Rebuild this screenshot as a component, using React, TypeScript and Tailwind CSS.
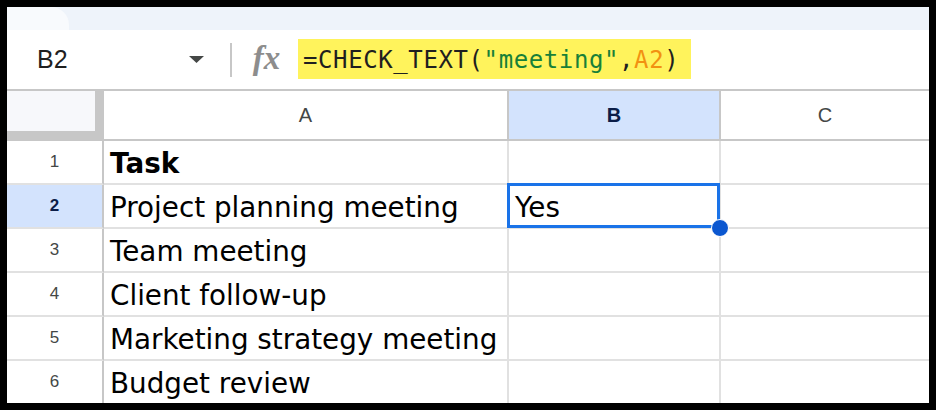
const rows = [
  { n: 1, a: "Task", bold: true },
  { n: 2, a: "Project planning meeting", b: "Yes", selected: true },
  { n: 3, a: "Team meeting" },
  { n: 4, a: "Client follow-up" },
  { n: 5, a: "Marketing strategy meeting" },
  { n: 6, a: "Budget review" },
];

const cellFont = { fontFamily: '"DejaVu Sans", Verdana, sans-serif' };
const uiFont = { fontFamily: '"Liberation Sans", Arial, sans-serif' };

export default function App() {
  return (
    <div className="w-[936px] h-[410px] bg-black p-[7px]">
      <div className="w-full h-full bg-white overflow-hidden flex flex-col">
        {/* top strip */}
        <div className="h-[23px] flex bg-[#eef3fa] shrink-0">
          <div className="w-[62px] bg-[#f8fafd] rounded-tr-[18px]"></div>
          <div className="flex-1"></div>
        </div>

        {/* formula bar */}
        <div className="h-[61px] shrink-0 flex items-center border-b-2 border-[#c7c7c7]" style={uiFont}>
          <div className="w-[223px] h-full flex items-center pl-[30px] pr-[26px]">
            <span className="text-[25px] text-[#1f1f1f] leading-none">B2</span>
            <svg className="ml-auto" width="15" height="8" viewBox="0 0 15 8">
              <path d="M0 0 L15 0 L7.5 7 Z" fill="#444746" />
            </svg>
          </div>
          <div className="w-[2px] h-[34px] bg-[#c7c7c7]"></div>
          <div
            className="w-[66px] flex justify-center text-[33px] italic font-bold text-[#8d8d8d] leading-none pl-[3px] pb-[3px]"
            style={{ fontFamily: '"Liberation Serif", "Times New Roman", serif' }}
          >
            fx
          </div>
          <div
            className="h-[40px] w-[393px] bg-[#fff35c] flex items-center pl-[5px] pt-[2px] text-[24px] tracking-[0.6px] text-[#1f1f1f] mb-[1px]"
            style={{ fontFamily: '"DejaVu Sans Mono", "Liberation Mono", monospace' }}
          >
            <span>=CHECK_TEXT(</span>
            <span className="text-[#188038]">"meeting"</span>
            <span>,</span>
            <span className="text-[#f29111]">A2</span>
            <span>)</span>
          </div>
        </div>

        {/* grid */}
        <div className="grid grid-cols-[97px_405px_212px_1fr] grid-rows-[50px_44px_44px_44px_44px_44px_44px]">
          {/* header row */}
          <div className="bg-[#c7c7c7]">
            <div className="w-[88px] h-[40px] bg-[#f7f8fb]"></div>
          </div>
          <div
            className="flex items-center justify-center border-r-2 border-b-2 border-[#c7c7c7] text-[20px] text-[#444746]"
            style={uiFont}
          >
            A
          </div>
          <div
            className="flex items-center justify-center border-r-2 border-b-2 border-[#c7c7c7] bg-[#d3e3fd] text-[20px] font-bold text-[#0b1d48]"
            style={uiFont}
          >
            B
          </div>
          <div
            className="flex items-center justify-center border-b-2 border-[#c7c7c7] text-[20px] text-[#444746]"
            style={uiFont}
          >
            C
          </div>

          {rows.map((r) => (
            <Row key={r.n} {...r} />
          ))}
        </div>
      </div>
    </div>
  );
}

function Row({
  n,
  a,
  b,
  bold,
  selected,
}: {
  n: number;
  a: string;
  b?: string;
  bold?: boolean;
  selected?: boolean;
}) {
  return (
    <>
      <div
        className={`flex items-center justify-center border-r-2 border-r-[#c7c7c7] border-b-2 border-b-[#e1e1e1] text-[17px] ${
          selected ? "bg-[#d3e3fd] font-bold text-[#0b1d48]" : "text-[#444746]"
        }`}
        style={uiFont}
      >
        {n}
      </div>
      <div
        className={`flex items-center pl-[6px] pt-[3px] border-r-2 border-b-2 border-[#e1e1e1] text-[27.8px] text-black whitespace-nowrap ${
          bold ? "font-bold" : ""
        }`}
        style={cellFont}
      >
        {a}
      </div>
      <div
        className="relative flex items-center pl-[6px] pt-[3px] border-r-2 border-b-2 border-[#e1e1e1] text-[27.8px] text-black"
        style={cellFont}
      >
        {b}
        {selected && (
          <>
            <div className="absolute -left-[2px] -top-[2px] w-[213px] h-[45px] border-[3px] border-[#1a73e8]"></div>
            <div className="absolute -right-[10px] -bottom-[10px] w-[18px] h-[18px] rounded-full bg-[#0b57d0] border border-white z-10"></div>
          </>
        )}
      </div>
      <div className="border-b-2 border-[#e1e1e1]"></div>
    </>
  );
}
